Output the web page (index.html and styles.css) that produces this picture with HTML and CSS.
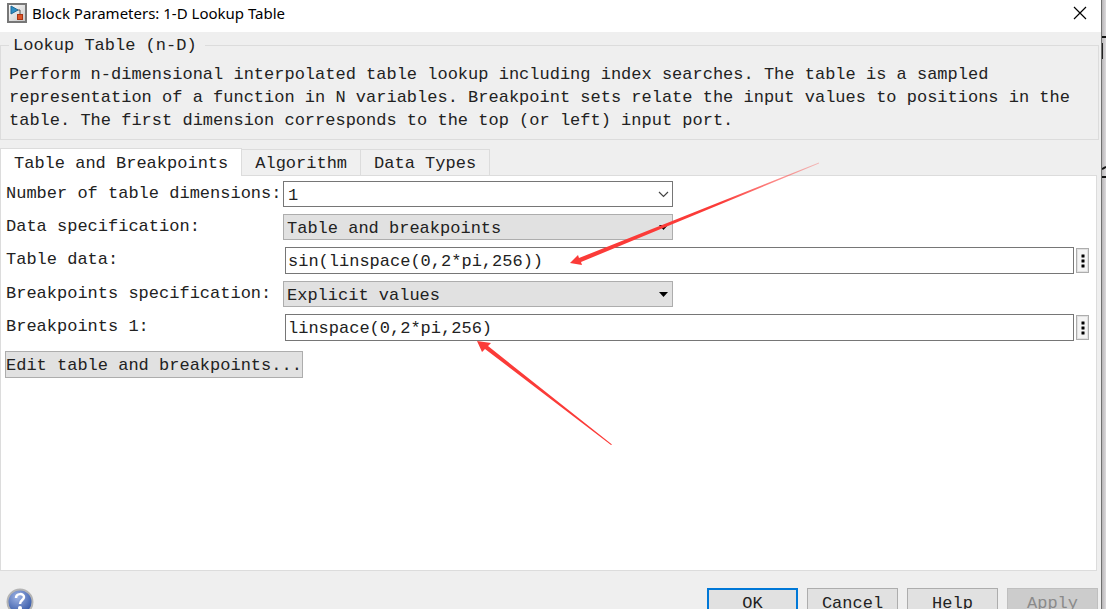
FILE: index.html
```
<!DOCTYPE html>
<html lang="en">
<head>
  <meta charset="utf-8">
  <title>Block Parameters: 1-D Lookup Table</title>
  <link rel="stylesheet" href="styles.css">
</head>
<body>
  <div class="dialog">
    <header class="titlebar">
      <svg class="app-icon" width="20" height="20" viewBox="0 0 20 20">
        <defs>
          <linearGradient id="iconBg" x1="0" y1="0" x2="1" y2="1">
            <stop offset="0" stop-color="#fff"/>
            <stop offset="1" stop-color="#c4c4c4"/>
          </linearGradient>
        </defs>
        <rect x="1" y="1" width="18" height="18" fill="url(#iconBg)" stroke="#777" stroke-width="2"/>
        <path d="M10 7h3v4" fill="none" stroke="#555"/>
        <path d="M4 3v8l7-4z" fill="#2d8fc5" stroke="#1d6796"/>
        <rect x="10.500" y="11.500" width="5" height="5" fill="#dc5528" stroke="#a83312"/>
      </svg>
      <h1>Block Parameters: 1-D Lookup Table</h1>
      <button class="close" type="button" aria-label="Close">
        <svg width="14" height="14" viewBox="0 0 14 14"><path d="M1 1l12 12M13 1L1 13" stroke="#000" stroke-width="1.2"/></svg>
      </button>
    </header>

    <fieldset class="description">
      <legend>Lookup Table (n-D)</legend>
      <p>Perform n-dimensional interpolated table lookup including index searches. The table is a sampled representation of a function in N variables. Breakpoint sets relate the input values to positions in the table. The first dimension corresponds to the top (or left) input port.</p>
    </fieldset>

    <nav class="tabs" role="tablist">
      <button class="tab active" type="button" role="tab" aria-selected="true">Table and Breakpoints</button>
      <button class="tab" type="button" role="tab" aria-selected="false">Algorithm</button>
      <button class="tab" type="button" role="tab" aria-selected="false">Data Types</button>
    </nav>

    <form class="pane" id="params">
      <div class="row">
        <label for="dims">Number of table dimensions:</label>
        <div class="combo editable">
          <select id="dims"><option>1</option><option>2</option><option>3</option></select>
          <svg width="11" height="7" viewBox="0 0 11 7"><path d="M1 1l4.500 4.500L10 1" fill="none" stroke="#444" stroke-width="1.200"/></svg>
        </div>
      </div>
      <div class="row">
        <label for="spec">Data specification:</label>
        <div class="combo">
          <select id="spec"><option>Table and breakpoints</option><option>Lookup table object</option></select>
          <svg width="11" height="7" viewBox="0 0 11 7"><path d="M1 1h9L5.500 6z"/></svg>
        </div>
      </div>
      <div class="row">
        <label for="data">Table data:</label>
        <div class="edit">
          <input type="text" id="data" value="sin(linspace(0,2*pi,256))">
          <button class="more" type="button" aria-label="Table data actions">
            <svg width="4" height="14" viewBox="0 0 4 14"><path d="M0 0h4v4H0zM0 5h4v4H0zM0 10h4v4H0z" fill="#bbb"/><path d="M1 0h2v4H1zM0 1h4v2H0zM1 5h2v4H1zM0 6h4v2H0zM1 10h2v4H1zM0 11h4v2H0z" fill="#777"/><path d="M1 1h2v2H1zM1 6h2v2H1zM1 11h2v2H1z"/></svg>
          </button>
        </div>
      </div>
      <div class="row">
        <label for="bpspec">Breakpoints specification:</label>
        <div class="combo">
          <select id="bpspec"><option>Explicit values</option><option>Even spacing</option></select>
          <svg width="11" height="7" viewBox="0 0 11 7"><path d="M1 1h9L5.500 6z"/></svg>
        </div>
      </div>
      <div class="row">
        <label for="bp1">Breakpoints 1:</label>
        <div class="edit">
          <input type="text" id="bp1" value="linspace(0,2*pi,256)">
          <button class="more" type="button" aria-label="Breakpoints 1 actions">
            <svg width="4" height="14" viewBox="0 0 4 14"><path d="M0 0h4v4H0zM0 5h4v4H0zM0 10h4v4H0z" fill="#bbb"/><path d="M1 0h2v4H1zM0 1h4v2H0zM1 5h2v4H1zM0 6h4v2H0zM1 10h2v4H1zM0 11h4v2H0z" fill="#777"/><path d="M1 1h2v2H1zM1 6h2v2H1zM1 11h2v2H1z"/></svg>
          </button>
        </div>
      </div>
      <button class="btn edit-table" type="button">Edit table and breakpoints...</button>
    </form>

    <footer class="footer">
      <button class="help-icon" type="button" aria-label="Help topics">
        <svg width="28" height="28" viewBox="0 0 28 28">
          <defs>
            <radialGradient id="ball" cx=".4" cy=".3" r=".7">
              <stop offset="0" stop-color="#9fb4e4"/>
              <stop offset="1" stop-color="#3457a6"/>
            </radialGradient>
          </defs>
          <circle cx="14" cy="14" r="12.500" fill="url(#ball)" stroke="#b4b4b4" stroke-width="2"/>
          <path d="M10 10c0-5 8-5 8-1 0 3-4 3-4 7" fill="none" stroke="#fff" stroke-width="2.500"/>
          <circle cx="14" cy="20" r="2" fill="#fff"/>
        </svg>
      </button>
      <button class="btn primary" type="submit" form="params">OK</button>
      <button class="btn" type="button">Cancel</button>
      <button class="btn" type="button">Help</button>
      <button class="btn" type="button" disabled>Apply</button>
    </footer>
  </div>

  <!-- part of the model canvas behind the dialog -->
  <div class="canvas">
    <svg width="4" height="200" viewBox="0 0 4 200">
      <path d="M0 37h4M0 177h4" stroke="#111" stroke-width="2"/>
      <path d="M0 169l4-2" stroke="#111" stroke-width="2"/>
      <path d="M0 43h1v16H0z" fill="#222"/>
    </svg>
  </div>

  <svg class="arrows" width="820" height="450" viewBox="0 0 820 450">
    <defs>
      <linearGradient id="fade" gradientUnits="userSpaceOnUse" x1="819" y1="163" x2="720" y2="203">
        <stop offset="0" stop-color="#fb3b38" stop-opacity=".3"/>
        <stop offset="1" stop-color="#fb3b38"/>
      </linearGradient>
    </defs>
    <path d="M570 263l8-8 1 3L819 162.500v1L581 262l1 3z" fill="url(#fade)"/>
    <path d="M477 341l14 2-3 3L612 444.500l-1 .5L485 349l-3 3z" fill="#fb3b38"/>
  </svg>
</body>
</html>
```
FILE: styles.css
```
* {
  box-sizing: border-box;
}

body {
  margin: 0;
  height: 100vh;
  display: flex;
  overflow: hidden;
  position: relative;
  background-color: #d5d3d5;
  color: #222;
  font-family: "Liberation Mono", monospace;
  font-size: 17px;
}

button,
input,
select {
  font: inherit;
  color: inherit;
  margin: 0;
  border-radius: 0;
}

.dialog {
  flex: 1;
  min-width: 0;
  display: flex;
  flex-direction: column;
  background-color: #efefef;
  border-right: 1px solid #707070;
}

.titlebar {
  display: flex;
  align-items: center;
  flex: none;
  height: 32px;
  padding: 0 8px 6px 7px;
  background-color: #fff;
}

.titlebar h1 {
  flex: 1;
  margin: 0 0 0 5px;
  font-family: "Noto Sans", sans-serif;
  font-size: 15px;
  font-weight: normal;
  line-height: 24px;
  color: #000;
}

.close {
  display: flex;
  padding: 6px;
  border: none;
  background: none;
}

.description {
  flex: none;
  min-width: 0;
  margin: 2px 2px 0 0;
  padding: 0 8px 7px;
  border: 1px solid #dcdcdc;
}

.description legend {
  padding: 2px 8px 0 4px;
  line-height: 20px;
}

.description p {
  margin: 7px 0 0;
  line-height: 23px;
}

.tabs {
  display: flex;
  align-items: flex-end;
  flex: none;
  margin-top: 8px;
}

.tab {
  height: 26px;
  padding: 2px 13px 0;
  border: 1px solid #dcdcdc;
  border-left: none;
  border-bottom: none;
  background-color: #f0f0f0;
}

.tab.active {
  height: 28px;
  margin-bottom: -1px;
  border-left: 1px solid #dcdcdc;
  background-color: #fff;
  position: relative;
}

.pane {
  flex: 1;
  min-height: 0;
  display: flex;
  flex-direction: column;
  gap: 7px;
  margin-right: 4px;
  padding: 5px 7px 0 4px;
  border: 1px solid #dcdcdc;
  background-color: #fff;
}

.row {
  display: grid;
  grid-template-columns: 278px 1fr;
}

.row label {
  padding-left: 1px;
  line-height: 25px;
  white-space: nowrap;
}

.combo {
  position: relative;
  width: 390px;
  height: 26px;
}

.combo select {
  appearance: none;
  width: 100%;
  height: 100%;
  padding: 2px 3px 0;
  border: 1px solid #adadad;
  background-color: #e1e1e1;
}

.combo.editable select {
  padding-left: 4px;
  border-color: #767676;
  background-color: #fff;
}

.combo svg {
  position: absolute;
  right: 4px;
  top: 10px;
  pointer-events: none;
}

.edit {
  display: flex;
  align-items: center;
  gap: 2px;
  padding-left: 2px;
}

.edit input {
  flex: 1;
  min-width: 0;
  height: 27px;
  padding: 2px 2px 0;
  border: 1px solid #767676;
  background-color: #fff;
}

.more {
  display: flex;
  align-items: center;
  justify-content: center;
  width: 13px;
  height: 25px;
  padding: 0;
  border: 1px solid #adadad;
  background-color: #f4f4f4;
  box-shadow: inset 0 0 0 1px #e1e1e1;
}

.btn {
  width: 91px;
  height: 30px;
  padding: 0;
  border: 1px solid #adadad;
  background-color: #e1e1e1;
}

.btn.primary {
  border: 2px solid #0078d7;
}

.btn:disabled {
  background-color: #ccc;
  border-color: #bfbfbf;
  color: #8a8a8a;
}

.edit-table {
  align-self: flex-start;
  width: auto;
  height: 27px;
  margin-top: 3px;
  padding: 2px 0 0;
}

.footer {
  display: flex;
  align-items: flex-start;
  gap: 9px;
  flex: none;
  height: 38px;
  padding: 17px 3px 0 6px;
  overflow: hidden;
}

.help-icon {
  margin-right: auto;
  padding: 0;
  border: none;
  background: none;
}

.canvas {
  width: 4px;
  background: linear-gradient(to right, #b8b6b8, #dcdadc);
}

.canvas svg {
  display: block;
}

.arrows {
  position: absolute;
  left: 0;
  top: 0;
  pointer-events: none;
}
```
